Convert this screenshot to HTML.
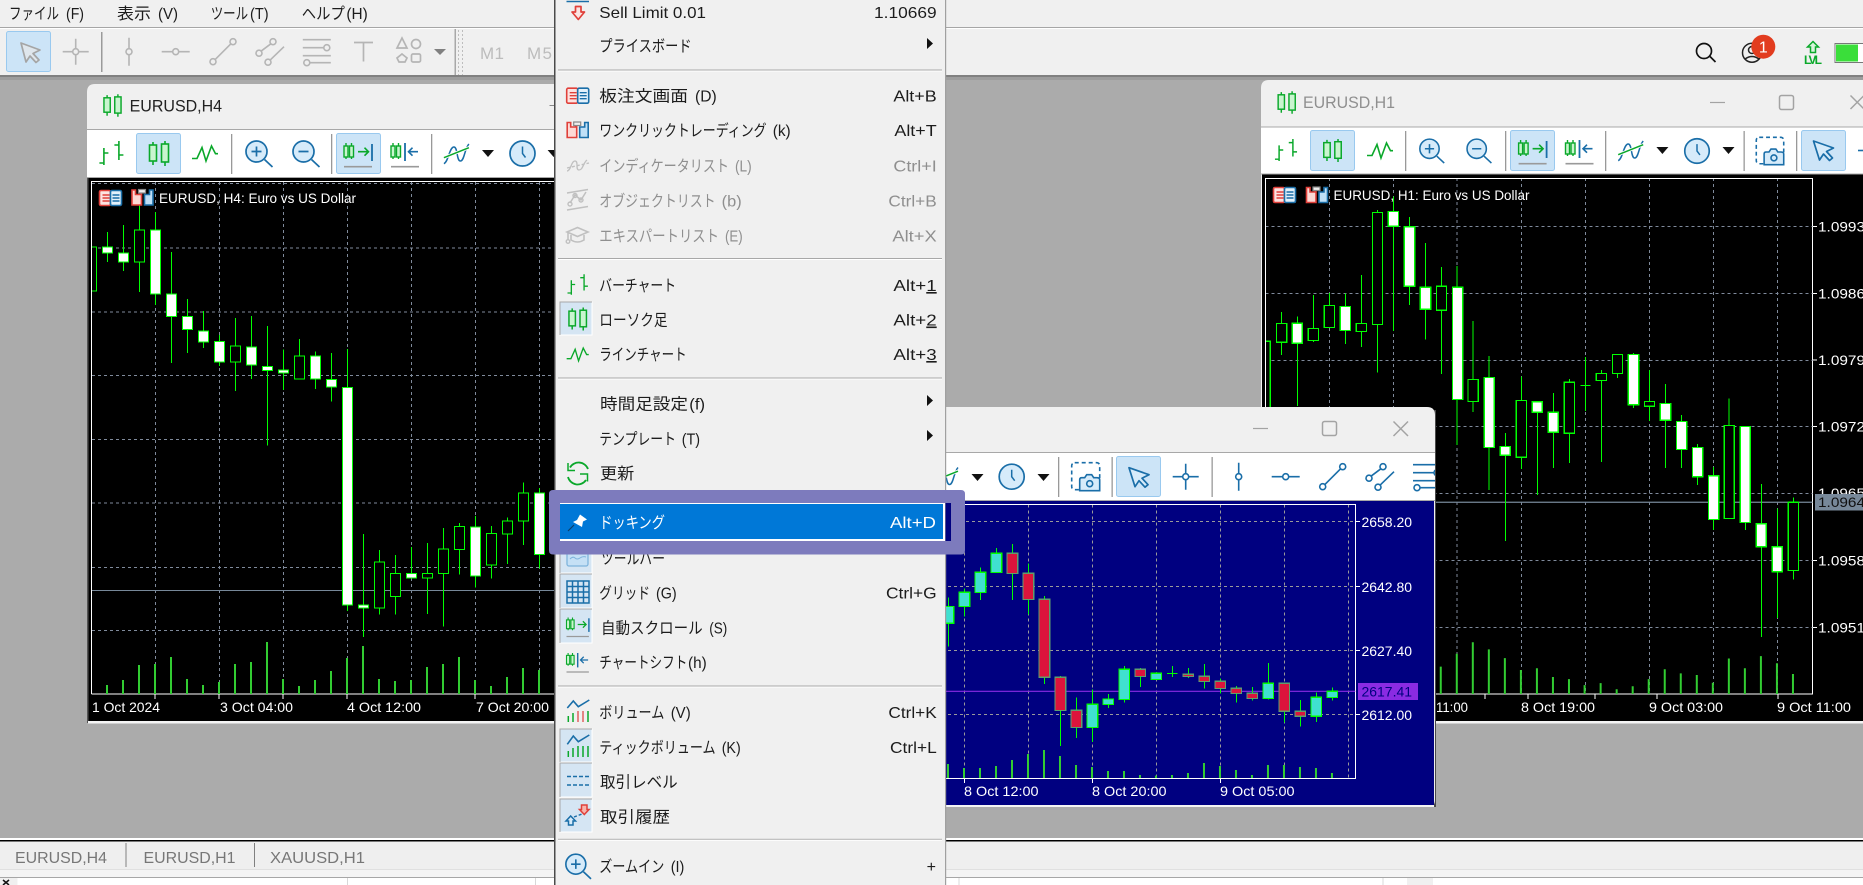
<!DOCTYPE html>
<html lang="ja"><head><meta charset="utf-8"><title>MT5</title>
<style>
html,body{margin:0;padding:0;background:#ababab;overflow:hidden}
svg{display:block}
text{font-family:"Liberation Sans","Noto Sans CJK JP",sans-serif}
.m{font-size:16px;fill:#1c1c1c}
.d{fill:#8f8f8f}
.c{font-size:14px;fill:#fff}
.v{vector-effect:non-scaling-stroke}
.dash{fill:none;stroke:#7f8a9b;stroke-width:1;stroke-dasharray:3 3;vector-effect:non-scaling-stroke;shape-rendering:crispEdges}
.w{fill:none;stroke:#00ff00;stroke-width:1;vector-effect:non-scaling-stroke;shape-rendering:crispEdges}
.bf{fill:#fff;stroke:#00ff00;stroke-width:1.4;vector-effect:non-scaling-stroke;shape-rendering:crispEdges}
.bh{fill:#000;stroke:#00ff00;stroke-width:1.2;vector-effect:non-scaling-stroke;shape-rendering:crispEdges}
</style></head><body>
<svg xmlns="http://www.w3.org/2000/svg" width="1863" height="885" viewBox="0 0 1863 885">
<defs>
<clipPath id="c1"><rect x="92" y="182" width="470" height="512"/></clipPath>
<clipPath id="c2"><rect x="1266" y="179" width="547" height="515"/></clipPath>
<clipPath id="c3"><rect x="900" y="505" width="456" height="273"/></clipPath>
<clipPath id="c4"><rect x="900" y="452" width="535" height="48"/></clipPath>
<clipPath id="c5"><rect x="1700" y="0" width="163" height="885"/></clipPath>
<g id="ibar" fill="none" stroke="#0aa82a" stroke-width="1.6"><path d="M-7.5-5V12M-12 10H-7.5M-7.5 0H-3M7.5-12V7M3-8H7.5M7.5 2H12"/></g>
<g id="icandle" stroke="#0aa82a" stroke-width="1.6" fill="#c9f5cf"><path d="M-6-11V12M6-12V13" fill="none"/><rect x="-9.5" y="-8" width="7" height="16"/><rect x="2.5" y="-9" width="7" height="18"/></g>
<g id="iline" fill="none" stroke="#0aa82a" stroke-width="1.6"><path d="M-13 5.500H-8L-3-5.500 1 8 6.500-7 10.500 .7H13"/></g>
<g id="izi" fill="#d6ebfa" stroke="#1a6ea8" stroke-width="1.7"><circle cx="-2.500" cy="-3.500" r="10.500"/><path d="M5.500 4.500L13.500 12M-7.500-3.500H2.500M-2.500-8.500V1.500" fill="none"/></g>
<g id="izo" fill="#d6ebfa" stroke="#1a6ea8" stroke-width="1.7"><circle cx="-2.500" cy="-3.500" r="10.500"/><path d="M5.500 4.500L13.500 12M-7.500-3.500H2.500" fill="none"/></g>
<g id="iauto"><g stroke="#0aa82a" stroke-width="1.4" fill="#c9f5cf"><path d="M-12-10V6M-6.500-10V6" fill="none"/><rect x="-14" y="-7" width="4" height="11"/><rect x="-8.500" y="-7" width="4" height="11"/></g><path d="M0-1.300H10.500M6.500-5.300L10.500-1.300 6.500 2.700" fill="none" stroke="#0aa82a" stroke-width="1.600"/><path d="M14-9V8" stroke="#1a6ea8" stroke-width="1.800"/><path d="M-14 13.700H14" stroke="#9a9a9a" stroke-width="1.600"/></g>
<g id="ishift"><g stroke="#0aa82a" stroke-width="1.4" fill="#c9f5cf"><path d="M-12-10V6M-6.500-10V6" fill="none"/><rect x="-14" y="-7" width="4" height="11"/><rect x="-8.500" y="-7" width="4" height="11"/></g><path d="M13-1.300H3.500M7.500-5.300L3.500-1.300 7.500 2.700" fill="none" stroke="#1a6ea8" stroke-width="1.600"/><path d="M0-10V8" stroke="#1a6ea8" stroke-width="1.800"/><path d="M-14 13.700H14" stroke="#9a9a9a" stroke-width="1.600"/></g>
<g id="iind" fill="none" stroke-width="1.500"><path d="M-12.500 10.700C-8 9-7-6-2.500-6 1.500-6 0 8 4 8 8 8 8-4 12.500-9" stroke="#1a6ea8"/><path d="M-12.500 4.700L12.500-5.300" stroke="#fff" stroke-width="3"/><path d="M-12.500 4.700L12.500-5.300" stroke="#0aa82a"/></g>
<g id="iclock"><circle r="12.500" fill="#d6ebfa" stroke="#1a6ea8" stroke-width="1.700"/><path d="M0-7V0L3 4" fill="none" stroke="#1a6ea8" stroke-width="1.500"/></g>
<path id="itri" d="M-6-3H6L0 4Z" fill="#111"/>
<g id="icam" fill="none" stroke="#1a6ea8" stroke-width="1.600"><rect x="-14" y="-14" width="28" height="27" rx="3" stroke-dasharray="4 3"/><path d="M-6 14V3Q-6 1-4 1H-1L1-2H6L8 1H11Q14 1 14 3V14Z" fill="#d6ebfa"/><circle cx="4" cy="7" r="3"/></g>
<path id="iarrow" d="M-10-9L10-2 3 1.500 9 8 6 10.500 0 4-4 10Z" fill="#d6ebfa" stroke="#1a6ea8" stroke-width="1.700" stroke-linejoin="round"/>
<g id="icross" fill="none" stroke="currentColor" stroke-width="1.600"><path d="M-13 0H-3M3 0H13M0-13V-3M0 3V13"/><circle r="3"/></g>
<g id="ivl" fill="none" stroke="currentColor" stroke-width="1.600"><path d="M0-14V-3M0 3V14"/><circle r="3"/></g>
<g id="ihl" fill="none" stroke="currentColor" stroke-width="1.600"><path d="M-14 0H-3M3 0H14"/><circle r="3"/></g>
<g id="itr" fill="none" stroke="currentColor" stroke-width="1.600"><path d="M-8 8L8-8"/><circle cx="-10" cy="10" r="3"/><circle cx="10" cy="-10" r="3"/></g>
<g id="ich" fill="none" stroke="currentColor" stroke-width="1.600"><path d="M-9-.5L1-8M0 8.500L14-5"/><circle cx="-11" cy="1.500" r="3"/><circle cx="3" cy="-10" r="3"/><circle cx="-2" cy="10.500" r="3"/></g>
<g id="ifi" fill="none" stroke="currentColor" stroke-width="1.600"><path d="M-14-12H14M-14-4H7M-14 4H14M-7 11H14"/><circle cx="10" cy="-4" r="3"/><circle cx="-10" cy="11" r="3"/></g>
<g id="idepth"><rect x="-11" y="-7.500" width="11" height="15" rx="1.500" fill="#fde2e0" stroke="#e0403a" stroke-width="1.600"/><rect x="0" y="-7.500" width="11" height="15" rx="1.500" fill="#e3f1fb" stroke="#1a6ea8" stroke-width="1.600"/><path d="M-8-3H-1M-8 0H-1M-8 3H-1" stroke="#e0403a" stroke-width="1.400"/><path d="M2-3H9M2 0H9M2 3H9" stroke="#1a6ea8" stroke-width="1.400"/></g>
<g id="ioc"><path d="M-10.500-7.500H-7V-3H-2V-7.500H-1V7.500H-10.500Z" fill="#fdd9d5" stroke="#e0403a" stroke-width="1.600"/><path d="M10.500-7.500H7V-3H2V7.500H10.500Z" fill="#bfe0f7" stroke="#1a6ea8" stroke-width="1.600"/><rect x="-4" y="-8" width="7" height="3.500" fill="#eee" stroke="#888" stroke-width="1.200"/></g>
</defs>

<!-- MDI background -->
<rect width="1863" height="885" fill="#ababab"/>

<!-- top bars -->
<rect width="1863" height="27" fill="#f0f0f0"/>
<rect y="27" width="1863" height="1" fill="#a6a6a6"/>
<rect y="28" width="1863" height="1" fill="#fff"/>
<rect y="29" width="1863" height="46" fill="#f0f0f0"/>
<rect y="75" width="1863" height="2" fill="#808080"/>
<rect y="77" width="1863" height="3" fill="#9d9d9d"/>
<text class="m" x="9" y="19" textLength="50" lengthAdjust="spacingAndGlyphs">ファイル</text>
<text class="m" x="66" y="19" textLength="18" lengthAdjust="spacingAndGlyphs">(F)</text>
<text class="m" x="117" y="19" textLength="34" lengthAdjust="spacingAndGlyphs">表示</text>
<text class="m" x="158" y="19" textLength="20" lengthAdjust="spacingAndGlyphs">(V)</text>
<text class="m" x="210.700" y="19" textLength="37.500" lengthAdjust="spacingAndGlyphs">ツール</text>
<text class="m" x="250" y="19" textLength="18.600" lengthAdjust="spacingAndGlyphs">(T)</text>
<text class="m" x="301.800" y="19" textLength="43" lengthAdjust="spacingAndGlyphs">ヘルプ</text>
<text class="m" x="346.400" y="19" textLength="21.400" lengthAdjust="spacingAndGlyphs">(H)</text>
<rect x="6.500" y="31.500" width="44" height="40" rx="2" fill="#cce4f7" stroke="#99c9ef"/>
<path d="M21 43L40 50 33 53.500 39 60 36 62.500 30 56 26 62Z" fill="#dfe6ec" stroke="#a5a5a5" stroke-width="1.700" stroke-linejoin="round"/>
<g style="color:#b5b5b5">
<use href="#icross" transform="translate(75.700,51.700)"/>
<use href="#ivl" transform="translate(129,51.700)"/>
<use href="#ihl" transform="translate(175.700,51.700)"/>
<use href="#itr" transform="translate(223,51.700)"/>
<use href="#ich" transform="translate(270,51.700)"/>
<use href="#ifi" transform="translate(316.800,51.700)"/>
<g fill="none" stroke="#b5b5b5" stroke-width="1.700">
<path d="M354 42.500H373M363.500 42.500V61.500"/>
<path d="M402 38L407 48H397ZM402 54L407 58 405 62H399L397 58Z"/>
<circle cx="416" cy="44" r="4.500"/><rect x="411.500" y="54" width="9" height="8" rx="1.500"/>
</g>
</g>
<path d="M434 49H446L440 55Z" fill="#808080"/>
<rect x="101" y="32" width="1.500" height="40" fill="#9a9a9a"/>
<rect x="454.500" y="29" width="1.500" height="46" fill="#a8a8a8"/>
<path d="M458.500 30V75M462.500 30V75" stroke="#bdbdbd" stroke-dasharray="2 2"/>
<text x="480" y="59" font-size="17" fill="#bcbcbc" textLength="24">M1</text>
<text x="527" y="59" font-size="17" fill="#bcbcbc" textLength="25">M5</text>
<!-- right toolbar -->
<g fill="none" stroke="#111" stroke-width="1.700"><circle cx="1704" cy="51" r="7.500"/><path d="M1710 56.500L1715.500 62"/></g>
<g fill="none" stroke="#222" stroke-width="1.500"><circle cx="1752" cy="52.700" r="9.500"/><circle cx="1752" cy="50" r="3.500"/><path d="M1745 59Q1752 54 1759 59"/></g>
<circle cx="1763.300" cy="46.700" r="12" fill="#e23c1f"/>
<text x="1763.300" y="52.500" font-size="16" fill="#fff" text-anchor="middle">1</text>
<path d="M1813 41.500L1818.500 47H1815.500V52.500H1810.500V47H1807.500Z" fill="#d6f5da" stroke="#0aa82a" stroke-width="1.500"/>
<text x="1813" y="64" font-size="12" font-weight="bold" fill="#0aa82a" text-anchor="middle" textLength="18">LVL</text>
<rect x="1835" y="43.500" width="30" height="19" fill="#fff" stroke="#777"/>
<rect x="1836" y="44.500" width="22" height="17" fill="#3ade3a"/>

<!-- WINDOW 1 -->
<path d="M87 723V92Q87 84 95 84H560V723Z" fill="#f0f0f0"/>
<rect x="87" y="129" width="473" height="1" fill="#a8a8a8"/>
<rect x="87" y="130" width="473" height="47" fill="#fff"/>
<rect x="87" y="177" width="473" height="1" fill="#a8a8a8"/>
<use href="#icandle" transform="translate(112.500,105) scale(.9)"/>
<text x="129.600" y="111.500" font-size="17" fill="#222" textLength="92.500" lengthAdjust="spacingAndGlyphs">EURUSD,H4</text>
<rect x="549.500" y="105" width="6" height="1" fill="#888"/>
<use href="#ibar" transform="translate(111.400,153)"/>
<rect x="136.500" y="133.500" width="44" height="40" rx="2" fill="#cce4f7" stroke="#99c9ef"/>
<use href="#icandle" transform="translate(159,153)"/>
<use href="#iline" transform="translate(205,153)"/>
<rect x="231" y="134" width="1.300" height="40" fill="#999"/>
<use href="#izi" transform="translate(259,155)"/>
<use href="#izo" transform="translate(306,155)"/>
<rect x="331" y="134" width="1.300" height="40" fill="#999"/>
<rect x="336.500" y="133.500" width="44" height="40" rx="2" fill="#cce4f7" stroke="#99c9ef"/>
<use href="#iauto" transform="translate(358,153)"/>
<use href="#ishift" transform="translate(405,153)"/>
<rect x="431" y="134" width="1.300" height="40" fill="#999"/>
<use href="#iind" transform="translate(456.400,153)"/>
<use href="#itri" transform="translate(488,153)"/>
<use href="#iclock" transform="translate(522.500,153.500)"/>
<use href="#itri" transform="translate(553.600,153)"/>
<!-- chart 1 -->
<rect x="88" y="178" width="472" height="543" fill="#000"/>
<rect x="87" y="178" width="1.500" height="545" fill="#555"/>
<rect x="88" y="721" width="472" height="2.500" fill="#f4f4f4"/>
<path d="M91.500 694V181.500H560" fill="none" stroke="#fff" stroke-width="1"/>
<path d="M91.500 694H560" stroke="#fff" stroke-width="1"/>
<g clip-path="url(#c1)">
<path class="dash" d="M92 183.500H560M92 248H560M92 312H560M92 375.500H560M92 439.500H560M92 503H560M92 567.500H560M92 630.500H560M155.500 182V694M219.500 182V694M283.500 182V694M347.500 182V694M411.500 182V694M475.500 182V694M539.500 182V694"/>
<path d="M92 590.500H560" stroke="#778899"/>
<path fill="none" stroke="#32cd32" stroke-width="2" d="M107 694V685M123 694V680M139 694V665M155 694V664M171 694V657M187 694V679M203 694V685M219 694V682M235 694V664M251 694V662M267 694V642M283 694V679M299 694V686M315 694V680M331 694V671M347 694V658M363 694V646M379 694V679M395 694V681M411 694V680M427 694V667M443 694V664M459 694V657M475 694V680M491 694V686M507 694V677M523 694V668M539 694V670"/>
<path class="w" d="M107.500 232V262M123.500 225V271M139.500 200V292M155.500 212V305M171.500 252V363M187.500 299V353M203.500 311V348M219.500 335V366M235.500 318V391M251.500 316V379M267.500 326V445.500M283.500 349.500V390M299.500 339V379M315.500 351.500V389M331.500 353V401.500M347.500 349V611M363.500 534V637M379.500 550V614.500M395.500 555V614.500M411.500 547V578M427.500 543V614M443.500 528V626.500M459.500 523V574.500M475.500 516V587.500M491.500 526V578.500M507.500 517.500V564M523.500 482.500V545M539.500 488V568.500"/>
<path class="bh" d="M85 247H96.500V291H85ZM134.500 230h10v32h-10ZM230.500 346h10v16h-10ZM294.500 356h10v23h-10ZM374.500 562h10v46h-10ZM390.500 573.500h10v23h-10ZM422.500 573.500h10v4.500h-10ZM438.500 549h10v24.500h-10ZM454.500 526.500h10v23h-10ZM486.500 533.500h10v31.500h-10ZM502.500 521h10v13h-10ZM518.500 493h10v28h-10Z"/>
<path class="bf" d="M102.500 247h10v6h-10ZM118.500 253h10v9h-10ZM150.500 230h10v64h-10ZM166.500 294h10v22.500h-10ZM182.500 316.500h10v13h-10ZM198.500 331h10v11h-10ZM214.500 341.500h10v20.500h-10ZM246.500 347h10v18h-10ZM262.500 366.500h10v4h-10ZM278.500 370h10v3h-10ZM310.500 356h10v23h-10ZM326.500 379.500h10v7.500h-10ZM342.500 387.500h10v217.500h-10ZM358.500 605h10v3h-10ZM406.500 573.500h10v4.500h-10ZM470.500 527h10v49h-10ZM534.500 493h10v61.500h-10Z"/>
</g>
<path d="M155 694V699M219 694V699M283 694V699M347 694V699M475 694V699" stroke="#fff"/>
<rect x="100" y="190.500" width="21" height="15" fill="#fff"/>
<use href="#idepth" transform="translate(110.500,198)"/>
<use href="#ioc" transform="translate(142.500,197.500)"/>
<text class="c" x="159" y="203" textLength="197" lengthAdjust="spacingAndGlyphs">EURUSD, H4:  Euro vs US Dollar</text>
<text class="c" x="92" y="712" textLength="68" lengthAdjust="spacingAndGlyphs">1 Oct 2024</text>
<text class="c" x="220" y="712" textLength="73" lengthAdjust="spacingAndGlyphs">3 Oct 04:00</text>
<text class="c" x="347" y="712" textLength="74" lengthAdjust="spacingAndGlyphs">4 Oct 12:00</text>
<text class="c" x="476" y="712" textLength="73" lengthAdjust="spacingAndGlyphs">7 Oct 20:00</text>

<!-- WINDOW 2 -->
<path d="M1261 723V88Q1261 80 1269 80H1863V723Z" fill="#f0f0f0"/>
<rect x="1261" y="126.500" width="602" height="1" fill="#a8a8a8"/>
<rect x="1261" y="127.500" width="602" height="46.500" fill="#fff"/>
<rect x="1261" y="173.500" width="602" height="1" fill="#a8a8a8"/>
<use href="#icandle" transform="translate(1286.700,102) scale(.9)"/>
<text x="1303" y="108" font-size="17" fill="#8f8f8f" textLength="92" lengthAdjust="spacingAndGlyphs">EURUSD,H1</text>
<path d="M1710 102.500H1725" stroke="#a3a3a3" stroke-width="1.200"/>
<rect x="1779.500" y="95.500" width="14" height="14" rx="2" fill="none" stroke="#a3a3a3" stroke-width="1.500"/>
<path d="M1850.500 95.500L1864 109M1864 95.500L1850.500 109" stroke="#a3a3a3" stroke-width="1.500"/>
<use href="#ibar" transform="translate(1286,150) scale(.92)"/>
<rect x="1310.500" y="130.500" width="44" height="40" rx="2" fill="#cce4f7" stroke="#99c9ef"/>
<use href="#icandle" transform="translate(1332.500,150) scale(.92)"/>
<use href="#iline" transform="translate(1380,150)"/>
<rect x="1405" y="131" width="1.300" height="40" fill="#999"/>
<use href="#izi" transform="translate(1431.800,152) scale(.92)"/>
<use href="#izo" transform="translate(1479,152) scale(.92)"/>
<rect x="1505" y="131" width="1.300" height="40" fill="#999"/>
<rect x="1510.500" y="130.500" width="44" height="40" rx="2" fill="#cce4f7" stroke="#99c9ef"/>
<use href="#iauto" transform="translate(1532.600,150)"/>
<use href="#ishift" transform="translate(1579.500,150)"/>
<rect x="1605" y="131" width="1.300" height="40" fill="#999"/>
<use href="#iind" transform="translate(1630.700,150)"/>
<use href="#itri" transform="translate(1662.400,150)"/>
<use href="#iclock" transform="translate(1697,151) scale(.98)"/>
<use href="#itri" transform="translate(1728.500,150)"/>
<rect x="1743.500" y="131" width="1.300" height="40" fill="#999"/>
<use href="#icam" transform="translate(1770,151) scale(.98)"/>
<rect x="1796" y="131" width="1.300" height="40" fill="#999"/>
<rect x="1801.500" y="130.500" width="44" height="40" rx="2" fill="#cce4f7" stroke="#99c9ef"/>
<use href="#iarrow" transform="translate(1823.500,150)"/>
<path d="M1858 150.500H1863" stroke="#1a6ea8" stroke-width="1.600"/>
<!-- chart 2 -->
<rect x="1262" y="174.500" width="601" height="546.500" fill="#000"/>
<rect x="1261" y="721" width="602" height="2.500" fill="#f4f4f4"/>
<path d="M1265.500 694V178.500H1812.500V694Z" fill="none" stroke="#fff"/>
<g clip-path="url(#c2)"><g transform="translate(1250,200) scale(.3909,.3381)">
<path class="dash" d="M40 78H1439M40 276H1439M40 474H1439M40 670H1439M40 868H1439M40 1066H1439M40 1264H1439M204 -65V1462M367 -65V1462M530 -65V1462M694 -65V1462M858 -65V1462M1022 -65V1462M1186 -65V1462M1349 -65V1462"/>
<path d="M40 894H1439" class="v" stroke="#778899" stroke-width="1.200"/>
<path class="v" fill="none" stroke="#32cd32" stroke-width="2" d="M488 1462V1380M529 1462V1342M570 1462V1308M611 1462V1329M652 1462V1355M693 1462V1390M734 1462V1385M775 1462V1411M816 1462V1417M856 1462V1435M897 1462V1429M938 1462V1447M979 1462V1438M1020 1462V1417M1061 1462V1388M1102 1462V1400M1143 1462V1405M1184 1462V1428M1225 1462V1356M1266 1462V1385M1307 1462V1349M1348 1462V1370M1389 1462V1402"/>
<path class="w" d="M81 332V458M121 344V610M162 281V420M203 275V312M244 276V426M285 222V435M326 30V510M367 -10V387M408 50V310M449 127V413M490 198V515M530 195V724M571 358V627M612 462V858M653 689V1008M694 522V796M735 597V873M776 571V793M817 530V778M858 465V624M845 548H871M899 503V775M940 457V527M981 453V615M1022 503V654M1063 544V793M1104 636V793M1145 722V843M1186 790V976M1226 587V942M1267 670V976M1308 840V1293M1349 913V1237M1390 880V1123"/>
<path class="bh" d="M20 418H52V700H20ZM68 365h26v56h-26ZM149 380h26v36h-26ZM190 312h26v65h-26ZM272 365h26v24h-26ZM313 37h26v331h-26ZM477 255h26v71h-26ZM558 531h26v65h-26ZM681 593h26v168h-26ZM804 539h26v151h-26ZM886 513h26v21h-26ZM927 457h26v56h-26ZM1009 596h26v14h-26ZM1213 667h26v275h-26ZM1377 894h26v202h-26Z"/>
<path class="bf" d="M108 365h26v59h-26ZM231 315h26v71h-26ZM354 34h26v44h-26ZM395 79h26v176h-26ZM436 258h26v65h-26ZM518 258h26v332h-26ZM599 525h26v207h-26ZM640 729h26v26h-26ZM722 597h26v31h-26ZM763 628h26v59h-26ZM968 457h26v148h-26ZM1050 602h26v50h-26ZM1091 655h26v83h-26ZM1132 732h26v86h-26ZM1173 815h26v130h-26ZM1254 670h26v284h-26ZM1295 957h26v68h-26ZM1336 1025h26v74h-26Z"/>
</g></g>
<path d="M1812.500 226.500H1817M1812.500 293.500H1817M1812.500 360H1817M1812.500 426.500H1817M1812.500 560.500H1817M1812.500 627.500H1817M1485 694V699M1528 694V699M1595 694V699M1657 694V699M1778 694V699" stroke="#fff"/>
<rect x="1273.500" y="187" width="22" height="16" fill="#fff"/>
<use href="#idepth" transform="translate(1284.500,195)"/>
<use href="#ioc" transform="translate(1317,195)"/>
<text class="c" x="1333.500" y="200" textLength="196" lengthAdjust="spacingAndGlyphs">EURUSD, H1:  Euro vs US Dollar</text>
<g clip-path="url(#c5)">
<text class="c" x="1818" y="231.500" textLength="47" lengthAdjust="spacingAndGlyphs">1.0993</text>
<text class="c" x="1818" y="298.500" textLength="47" lengthAdjust="spacingAndGlyphs">1.0986</text>
<text class="c" x="1818" y="365" textLength="47" lengthAdjust="spacingAndGlyphs">1.0979</text>
<text class="c" x="1818" y="431.500" textLength="47" lengthAdjust="spacingAndGlyphs">1.0972</text>
<text class="c" x="1818" y="498" textLength="47" lengthAdjust="spacingAndGlyphs">1.0965</text>
<text class="c" x="1818" y="565.500" textLength="47" lengthAdjust="spacingAndGlyphs">1.0958</text>
<text class="c" x="1818" y="632.500" textLength="47" lengthAdjust="spacingAndGlyphs">1.0951</text>
</g>
<rect x="1815" y="494" width="48" height="16.500" fill="#778899"/>
<text x="1818" y="507" font-size="14" fill="#111" textLength="47" lengthAdjust="spacingAndGlyphs">1.0964</text>
<text class="c" x="1436" y="712" textLength="32" lengthAdjust="spacingAndGlyphs">11:00</text>
<text class="c" x="1521" y="712" textLength="74" lengthAdjust="spacingAndGlyphs">8 Oct 19:00</text>
<text class="c" x="1649" y="712" textLength="74" lengthAdjust="spacingAndGlyphs">9 Oct 03:00</text>
<text class="c" x="1777" y="712" textLength="74" lengthAdjust="spacingAndGlyphs">9 Oct 11:00</text>

<!-- WINDOW 3 -->
<rect x="1434" y="410" width="2" height="397" fill="#4a4a4a"/>
<path d="M900 807V407H1427Q1435 407 1435 415V800Q1435 807 1428 807Z" fill="#f0f0f0"/>
<rect x="900" y="452" width="535" height="1" fill="#a8a8a8"/>
<rect x="900" y="453" width="535" height="47" fill="#fff"/>
<rect x="900" y="500" width="535" height="1" fill="#a8a8a8"/>
<path d="M1253 428.500H1268" stroke="#a3a3a3" stroke-width="1.200"/>
<rect x="1322.500" y="421.500" width="14" height="14" rx="2" fill="none" stroke="#a3a3a3" stroke-width="1.500"/>
<path d="M1393.500 421.500L1408 436M1408 421.500L1393.500 436" stroke="#a3a3a3" stroke-width="1.500"/>
<g clip-path="url(#c4)">
<use href="#iind" transform="translate(945.500,476.500)"/>
<use href="#itri" transform="translate(977.500,477)"/>
<use href="#iclock" transform="translate(1011.700,476.700)"/>
<use href="#itri" transform="translate(1043.500,477)"/>
<rect x="1058" y="457" width="1.300" height="40" fill="#999"/>
<use href="#icam" transform="translate(1085.700,476.700)"/>
<rect x="1111.500" y="457" width="1.300" height="40" fill="#999"/>
<rect x="1116.500" y="456.500" width="44" height="40" rx="2" fill="#cce4f7" stroke="#99c9ef"/>
<use href="#iarrow" transform="translate(1139,476.700)"/>
<rect x="1211.500" y="457" width="1.300" height="40" fill="#999"/>
<g style="color:#1a6ea8">
<use href="#icross" transform="translate(1185.700,476.700)"/>
<use href="#ivl" transform="translate(1238.700,476.700)"/>
<use href="#ihl" transform="translate(1285.700,476.700)"/>
<use href="#itr" transform="translate(1332.700,476.700)"/>
<use href="#ich" transform="translate(1380,476.700)"/>
<use href="#ifi" transform="translate(1427,476.700)"/>
</g>
</g>
<rect x="900" y="501" width="534" height="304.500" fill="#000080"/>
<rect x="900" y="805" width="534" height="2" fill="#f4f4f4"/>
<path d="M900 504.500H1355.500V778.500H900" fill="none" stroke="#fff"/>
<g clip-path="url(#c3)"><g transform="translate(940,400) scale(.3333)">
<path class="dash" style="stroke:#9a9a9a" d="M-120 364H1246M-120 560H1246M-120 751H1246M-120 943H1246M73 313V1135M265 313V1135M457 313V1135M649 313V1135M841 313V1135M1033 313V1135M1226 313V1135"/>
<path class="v" d="M-120 874H1246" stroke="#8a2be2" stroke-width="1.200"/>
<path class="v" fill="none" stroke="#32cd32" stroke-width="2" d="M24 1135V1092M72 1135V1104M120 1135V1104M168 1135V1098M216 1135V1080M264 1135V1062M312 1135V1050M360 1135V1068M408 1135V1095M456 1135V1101M504 1135V1113M552 1135V1113M600 1135V1125M648 1135V1127M696 1135V1125M744 1135V1119M792 1135V1089M840 1135V1098M888 1135V1110M936 1135V1125M984 1135V1095M1032 1135V1095M1080 1135V1101M1128 1135V1104M1176 1135V1119"/>
<path class="w" d="M25 592V740M73 565V650M121 502V600M169 444V518M217 432V600M265 490V644M313 588V852M361 828V1038M409 892V1014M457 868V1026M505 882V924M553 798V908M601 804V861M649 816V840M697 798V831M681 820H713M745 804V834M793 792V866M841 835V880M889 858V908M937 861V902M985 789V899M1033 850V968M1081 900V980M1129 877V966M1177 862V902"/>
<path class="v" fill="#40e0d0" stroke="#00ff00" stroke-width="1.200" shape-rendering="crispEdges" d="M9 620h32v50h-32ZM57 577h32v43h-32ZM105 517h32v61h-32ZM153 460h32v58h-32ZM441 913h32v70h-32ZM489 897h32v17h-32ZM537 808h32v91h-32ZM633 820h32v19h-32ZM969 850h32v46h-32ZM1113 892h32v57h-32ZM1161 874h32v19h-32Z"/>
<path class="v" fill="#dc143c" stroke="#5f9e6e" stroke-width="1.200" shape-rendering="crispEdges" d="M201 460h32v61h-32ZM249 520h32v79h-32ZM297 598h32v234h-32ZM345 832h32v100h-32ZM393 931h32v52h-32ZM585 808h32v22h-32ZM729 823h32v7h-32ZM777 829h32v16h-32ZM825 844h32v22h-32ZM873 865h32v16h-32ZM921 880h32v16h-32ZM1017 850h32v84h-32ZM1065 934h32v15h-32Z"/>
</g></g>
<path d="M1355.500 521.500H1360M1355.500 586.500H1360M1355.500 650.500H1360M1355.500 714.500H1360M964.500 778V783M1092.500 778V783M1220.500 778V783" stroke="#fff"/>
<rect x="1358" y="683" width="60" height="17" fill="#8a2be2"/>
<text x="1361.500" y="696.500" font-size="14" fill="#000080" textLength="50.500" lengthAdjust="spacingAndGlyphs">2617.41</text>
<text class="c" x="1361.500" y="527" textLength="50.500" lengthAdjust="spacingAndGlyphs">2658.20</text>
<text class="c" x="1361.500" y="592" textLength="50.500" lengthAdjust="spacingAndGlyphs">2642.80</text>
<text class="c" x="1361.500" y="656" textLength="50.500" lengthAdjust="spacingAndGlyphs">2627.40</text>
<text class="c" x="1361.500" y="720" textLength="50.500" lengthAdjust="spacingAndGlyphs">2612.00</text>
<text class="c" x="964" y="796" textLength="74.500" lengthAdjust="spacingAndGlyphs">8 Oct 12:00</text>
<text class="c" x="1092" y="796" textLength="74.500" lengthAdjust="spacingAndGlyphs">8 Oct 20:00</text>
<text class="c" x="1220" y="796" textLength="74.500" lengthAdjust="spacingAndGlyphs">9 Oct 05:00</text>

<!-- bottom bars -->
<rect y="838" width="1863" height="2" fill="#fff"/>
<rect y="840" width="1863" height="1.500" fill="#000"/>
<rect y="841.500" width="1863" height="28" fill="#efefef"/>
<rect y="869" width="1863" height="1" fill="#e0e0e0"/>
<rect y="870" width="1863" height="7" fill="#f4f4f4"/>
<rect y="877" width="1863" height="1.200" fill="#a6a6a6"/>
<rect y="878" width="1863" height="7" fill="#fff"/>
<rect y="878" width="17.500" height="7" fill="#f0f0f0"/>
<path d="M347.500 878V885M535.500 878V885M959 878V885M1383 878V885" stroke="#d8d8d8"/>
<rect x="1407" y="878" width="26" height="7" fill="#f0f0f0"/>
<path d="M3 880L9 885M9 880L3 885" stroke="#111" stroke-width="1.500"/>
<text x="15" y="863" font-size="16" fill="#777" textLength="92" lengthAdjust="spacingAndGlyphs">EURUSD,H4</text>
<rect x="125.500" y="843" width="1" height="24" fill="#808080"/>
<text x="143.500" y="863" font-size="16" fill="#777" textLength="92" lengthAdjust="spacingAndGlyphs">EURUSD,H1</text>
<rect x="254" y="843" width="1" height="24" fill="#808080"/>
<text x="270" y="863" font-size="16" fill="#777" textLength="95" lengthAdjust="spacingAndGlyphs">XAUUSD,H1</text>

<!-- MENU -->
<rect x="554" y="0" width="1.500" height="885" fill="#4a4a4a"/>
<rect x="555.500" y="0" width="390" height="885" fill="#f0f0f0"/>
<rect x="945" y="0" width="1.200" height="885" fill="#a0a0a0"/>
<g fill="#a8a8a8"><rect x="558" y="69.500" width="384" height="1"/><rect x="558" y="258" width="384" height="1"/><rect x="558" y="377.500" width="384" height="1"/><rect x="558" y="685.500" width="384" height="1"/><rect x="558" y="838.800" width="384" height="1"/></g>
<g fill="#fff"><rect x="558" y="70.500" width="384" height="1"/><rect x="558" y="259" width="384" height="1"/><rect x="558" y="378.500" width="384" height="1"/><rect x="558" y="686.500" width="384" height="1"/><rect x="558" y="839.800" width="384" height="1"/></g>

<!-- icon highlight boxes -->
<g fill="#d5e5f3" stroke="#fff">
<path d="M560 302h32v33h-32Z"/><path d="M560 541h32v32h-32Z"/><path d="M560 574h32v34h-32Z"/><path d="M560 609h32v34h-32Z"/><path d="M560 729h32v33h-32Z"/><path d="M560 763h32v34h-32Z"/><path d="M560 799h32v33h-32Z"/>
</g>
<path d="M560 335V302H592M560 573V541H592M560 608V574H592M560 643V609H592M560 762V729H592M560 797V763H592M560 832V799H592" fill="none" stroke="#a8a8a8"/>

<!-- menu icons -->
<path d="M566.500 1.500H589" stroke="#1a6ea8" stroke-width="1.500"/>
<path d="M575.500 6.500H581V12H584.500L578.300 19.500 572 12H575.500Z" fill="#fbe4e2" stroke="#e0403a" stroke-width="1.700" stroke-linejoin="round"/>
<use href="#idepth" transform="translate(577.700,95.700)"/>
<use href="#ioc" transform="translate(577.700,130)"/>
<g fill="none" stroke="#c0c0c0" stroke-width="1.400">
<path d="M567 171C571 171 571 161 575 161S575 170 579 170 583 163 587 160" stroke-width="1.300"/><path d="M567 168L589 163" stroke-dasharray="3 2"/>
<path d="M567 193L588 189.500M567 210L588 206.500M570 203L575 195 581 200 586 192" stroke-width="1.500"/><circle cx="570" cy="204" r="2"/><circle cx="575" cy="195.500" r="2"/><circle cx="581" cy="200" r="2"/>
<path d="M567 232L577.500 227.500 588 232 577.500 236.500ZM571 235V240Q577.500 244 584 240V235M568 233V240" stroke-width="1.600"/><circle cx="568" cy="241.500" r="1.800"/>
</g>
<use href="#ibar" transform="translate(577.700,284.500) scale(.85)"/>
<use href="#icandle" transform="translate(577.700,318.500) scale(.92)"/>
<use href="#iline" transform="translate(577.700,354) scale(.85)"/>
<g fill="none" stroke="#0aa82a" stroke-width="1.800"><path d="M570 467.500A10 10 0 0 1 588 469M568 477A10 10 0 0 0 586 480"/><path d="M568 463V470.500H575M587.500 481.500V474H580" stroke-width="1.500"/></g>
<rect x="567" y="551" width="21" height="15" rx="2" fill="#c5e0f5" stroke="#7fb4dc" stroke-width="1.300"/>
<path d="M570 559Q573 556 575 558T580 558 586 557" fill="none" stroke="#7fb4dc"/>
<path d="M567 581H589V603H567ZM567 586.500H589M567 592H589M567 597.500H589M572.500 581V603M578 581V603M583.500 581V603" fill="none" stroke="#1a6ea8" stroke-width="1.500"/>
<use href="#iauto" transform="translate(577.700,625.500) scale(.8)"/>
<use href="#ishift" transform="translate(577.700,661) scale(.8)"/>
<path d="M567.300 708L573.300 701 578.300 706.700 589.300 700" fill="none" stroke="#1a6ea8" stroke-width="1.600"/>
<path d="M568.300 722V716M573 722V713M588 722V711" fill="none" stroke="#0aa82a" stroke-width="1.500"/>
<path d="M578 722V711M583 722V711" stroke="#e06060" stroke-width="1.500"/>
<path d="M567.300 744.300L573.300 736 578.300 741.700 589.300 735" fill="none" stroke="#1a6ea8" stroke-width="1.600"/>
<path d="M568.300 757V751M573 757V748M578 757V746M583 757V746M588 757V746" fill="none" stroke="#0aa82a" stroke-width="1.500"/>
<path d="M567 776.500H589M567 785H589" stroke="#1a6ea8" stroke-width="1.500" stroke-dasharray="4 2"/>
<path d="M574 817L582 814" stroke="#1a6ea8" stroke-width="1.400" stroke-dasharray="3 2"/>
<path d="M570.700 816L575.500 821H573V825H568.500V821H566Z" fill="#d6ebfa" stroke="#1a6ea8" stroke-width="1.500"/>
<path d="M581.500 805H587V809.500H589L584.300 814.500 579.500 809.500H581.500Z" fill="#f8b4ae" stroke="#e0403a" stroke-width="1.500"/>
<use href="#izi" transform="translate(578.200,867.500) scale(.95)"/>

<!-- menu text -->
<text class="m" x="599.300" y="18" textLength="106.700" lengthAdjust="spacingAndGlyphs">Sell Limit 0.01</text>
<text class="m" x="936.700" y="18" text-anchor="end" textLength="62.700" lengthAdjust="spacingAndGlyphs">1.10669</text>
<text class="m" x="599.300" y="51.500" textLength="92.300" lengthAdjust="spacingAndGlyphs">プライスボード</text>
<text class="m" x="599.300" y="101.500" textLength="88.700" lengthAdjust="spacingAndGlyphs">板注文画面</text>
<text class="m" x="695" y="101.500" textLength="21.700" lengthAdjust="spacingAndGlyphs">(D)</text>
<text class="m" x="936.700" y="101.500" text-anchor="end" textLength="43.300" lengthAdjust="spacingAndGlyphs">Alt+B</text>
<text class="m" x="599.300" y="136" textLength="167.300" lengthAdjust="spacingAndGlyphs">ワンクリックトレーディング</text>
<text class="m" x="772.700" y="136" textLength="18" lengthAdjust="spacingAndGlyphs">(k)</text>
<text class="m" x="936.700" y="136" text-anchor="end" textLength="42.300" lengthAdjust="spacingAndGlyphs">Alt+T</text>
<text class="m d" x="599.300" y="171.500" textLength="129.700" lengthAdjust="spacingAndGlyphs">インディケータリスト</text>
<text class="m d" x="735" y="171.500" textLength="16.700" lengthAdjust="spacingAndGlyphs">(L)</text>
<text class="m d" x="936.700" y="171.500" text-anchor="end" textLength="43.300" lengthAdjust="spacingAndGlyphs">Ctrl+I</text>
<text class="m d" x="599.300" y="206.500" textLength="116.300" lengthAdjust="spacingAndGlyphs">オブジェクトリスト</text>
<text class="m d" x="721.700" y="206.500" textLength="20" lengthAdjust="spacingAndGlyphs">(b)</text>
<text class="m d" x="936.700" y="206.500" text-anchor="end" textLength="48.300" lengthAdjust="spacingAndGlyphs">Ctrl+B</text>
<text class="m d" x="599.300" y="241.500" textLength="119.700" lengthAdjust="spacingAndGlyphs">エキスパートリスト</text>
<text class="m d" x="725" y="241.500" textLength="17.700" lengthAdjust="spacingAndGlyphs">(E)</text>
<text class="m d" x="936.700" y="241.500" text-anchor="end" textLength="44.300" lengthAdjust="spacingAndGlyphs">Alt+X</text>
<text class="m" x="599.300" y="291" textLength="76.700" lengthAdjust="spacingAndGlyphs">バーチャート</text>
<text class="m" x="936.700" y="291" text-anchor="end" textLength="43.300" lengthAdjust="spacingAndGlyphs">Alt+<tspan text-decoration="underline">1</tspan></text>
<text class="m" x="599.300" y="325.500" textLength="68.300" lengthAdjust="spacingAndGlyphs">ローソク足</text>
<text class="m" x="936.700" y="325.500" text-anchor="end" textLength="43.300" lengthAdjust="spacingAndGlyphs">Alt+<tspan text-decoration="underline">2</tspan></text>
<text class="m" x="599.300" y="360" textLength="87.300" lengthAdjust="spacingAndGlyphs">ラインチャート</text>
<text class="m" x="936.700" y="360" text-anchor="end" textLength="43.300" lengthAdjust="spacingAndGlyphs">Alt+<tspan text-decoration="underline">3</tspan></text>
<text class="m" x="600" y="409.500" textLength="88" lengthAdjust="spacingAndGlyphs">時間足設定</text>
<text class="m" x="689.300" y="409.500" textLength="15.700" lengthAdjust="spacingAndGlyphs">(f)</text>
<text class="m" x="599.300" y="444.500" textLength="76.700" lengthAdjust="spacingAndGlyphs">テンプレート</text>
<text class="m" x="681.700" y="444.500" textLength="18.300" lengthAdjust="spacingAndGlyphs">(T)</text>
<text class="m" x="600" y="479" textLength="34.300" lengthAdjust="spacingAndGlyphs">更新</text>
<text class="m" x="601" y="564" textLength="64" lengthAdjust="spacingAndGlyphs">ツールバー</text>
<text class="m" x="599.300" y="598.500" textLength="50.700" lengthAdjust="spacingAndGlyphs">グリッド</text>
<text class="m" x="656" y="598.500" textLength="20.700" lengthAdjust="spacingAndGlyphs">(G)</text>
<text class="m" x="936.700" y="598.500" text-anchor="end" textLength="50.700" lengthAdjust="spacingAndGlyphs">Ctrl+G</text>
<text class="m" x="601" y="633.500" textLength="101.700" lengthAdjust="spacingAndGlyphs">自動スクロール</text>
<text class="m" x="709.300" y="633.500" textLength="18" lengthAdjust="spacingAndGlyphs">(S)</text>
<text class="m" x="599.300" y="668" textLength="88" lengthAdjust="spacingAndGlyphs">チャートシフト</text>
<text class="m" x="688" y="668" textLength="18.700" lengthAdjust="spacingAndGlyphs">(h)</text>
<text class="m" x="599.300" y="718" textLength="65" lengthAdjust="spacingAndGlyphs">ボリューム</text>
<text class="m" x="670.700" y="718" textLength="20" lengthAdjust="spacingAndGlyphs">(V)</text>
<text class="m" x="936.700" y="718" text-anchor="end" textLength="48.300" lengthAdjust="spacingAndGlyphs">Ctrl+K</text>
<text class="m" x="599.300" y="753" textLength="116.300" lengthAdjust="spacingAndGlyphs">ティックボリューム</text>
<text class="m" x="721.700" y="753" textLength="19" lengthAdjust="spacingAndGlyphs">(K)</text>
<text class="m" x="936.700" y="753" text-anchor="end" textLength="46.700" lengthAdjust="spacingAndGlyphs">Ctrl+L</text>
<text class="m" x="600" y="787.500" textLength="77.700" lengthAdjust="spacingAndGlyphs">取引レベル</text>
<text class="m" x="600" y="822.500" textLength="70" lengthAdjust="spacingAndGlyphs">取引履歴</text>
<text class="m" x="599.300" y="872" textLength="65" lengthAdjust="spacingAndGlyphs">ズームイン</text>
<text class="m" x="670.700" y="872" textLength="13.700" lengthAdjust="spacingAndGlyphs">(I)</text>
<text class="m" x="936" y="872" text-anchor="end">+</text>
<path d="M927 38L933 43.500 927 49ZM927 395L933 400.500 927 406ZM927 430L933 435.500 927 441Z" fill="#111"/>

<!-- highlighted row + ring -->
<rect x="945.500" y="503" width="6" height="38" fill="#000080"/>
<rect x="560" y="503" width="385" height="38" fill="#fff"/>
<rect x="560" y="504" width="383" height="35" fill="#0078d7"/>
<path d="M574 525L568 531" stroke="#0a3f6b" stroke-width="1.200"/>
<path d="M580 514.500L587 519.500 583 521.500 582 527 573 522 577 520Z" fill="#fff"/>
<text x="599.300" y="528" font-size="16" fill="#fff" textLength="65.700" lengthAdjust="spacingAndGlyphs">ドッキング</text>
<text x="936" y="528" font-size="16" fill="#fff" text-anchor="end" textLength="46" lengthAdjust="spacingAndGlyphs">Alt+D</text>
<path fill-rule="evenodd" fill="#7d7bbd" d="M553 490H961Q965 490 965 494V550.500Q965 554.500 961 554.500H553Q549 554.500 549 550.500V494Q549 490 553 490ZM560 503V541H951V503Z"/>
</svg>
</body></html>
